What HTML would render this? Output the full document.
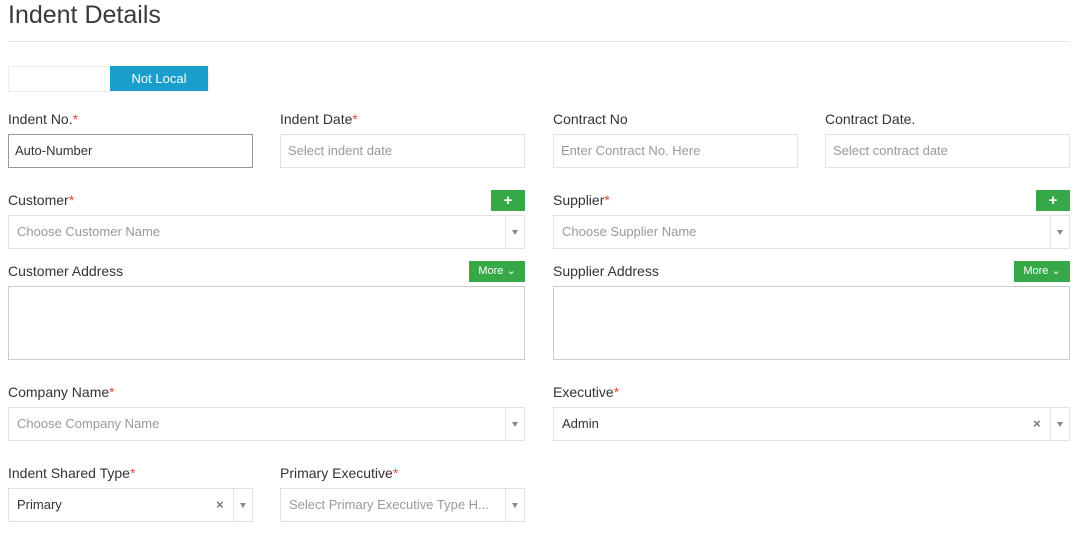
<!DOCTYPE html>
<html><head><style>
*{box-sizing:border-box;margin:0;padding:0}
body{width:1075px;height:539px;background:#fff;font-family:"Liberation Sans",sans-serif;color:#333;position:relative;overflow:hidden}
.a{position:absolute}
.t{left:8px;top:1px;font-size:25px;font-weight:300;color:#3a3a3a;letter-spacing:0px}
.hr{left:8px;top:41px;width:1062px;height:1px;background:#e8e8e8}
.lbl{font-size:14px;color:#333;line-height:18px}
.lbl b{color:#e74c3c;font-weight:normal}
.inp{height:34px;border:1px solid #e2e2e2;font-size:13px;color:#999;padding-left:8px;line-height:32px;white-space:nowrap;overflow:hidden}
.sel .ar{position:absolute;right:0;top:0;width:19px;height:32px;border-left:1px solid #e2e2e2}
.sel .ar:after{content:"";position:absolute;left:6px;top:14px;border:3.5px solid transparent;border-top:5px solid #888;border-bottom:0}
.x{position:absolute;font-size:13px;color:#777;font-weight:bold;top:0}
.btn{background:#36a847;color:#fff;font-size:11px;text-align:center;line-height:21px;height:21px}
</style></head><body>
<div class="a t">Indent Details</div>
<div class="a hr"></div>
<div class="a" style="left:8px;top:66px;width:201px;height:26px;border:1px solid #eee"></div>
<div class="a" style="left:110px;top:66px;width:98px;height:25px;background:#1a9ecb;color:#fff;font-size:13px;text-align:center;line-height:25px">Not Local</div>

<div class="a lbl" style="left:8px;top:110px">Indent No.<b>*</b></div>
<div class="a lbl" style="left:280px;top:110px">Indent Date<b>*</b></div>
<div class="a lbl" style="left:553px;top:110px">Contract No</div>
<div class="a lbl" style="left:825px;top:110px">Contract Date.</div>
<div class="a inp" style="left:8px;top:134px;width:245px;border-color:#999;color:#333;padding-left:6px">Auto-Number</div>
<div class="a inp" style="left:280px;top:134px;width:245px;padding-left:7px">Select indent date</div>
<div class="a inp" style="left:553px;top:134px;width:245px;padding-left:7px">Enter Contract No. Here</div>
<div class="a inp" style="left:825px;top:134px;width:245px;padding-left:7px">Select contract date</div>

<div class="a lbl" style="left:8px;top:191px">Customer<b>*</b></div>
<div class="a btn" style="left:491px;top:190px;width:34px;font-size:15px;font-weight:bold">+</div>
<div class="a inp sel" style="left:8px;top:215px;width:517px">Choose Customer Name<div class="ar"></div></div>
<div class="a lbl" style="left:553px;top:191px">Supplier<b>*</b></div>
<div class="a btn" style="left:1036px;top:190px;width:34px;font-size:15px;font-weight:bold">+</div>
<div class="a inp sel" style="left:553px;top:215px;width:517px">Choose Supplier Name<div class="ar"></div></div>

<div class="a lbl" style="left:8px;top:262px">Customer Address</div>
<div class="a btn" style="left:469px;top:261px;width:56px">More &#8964;</div>
<div class="a" style="left:8px;top:286px;width:517px;height:74px;border:1px solid #ccc"></div>
<div class="a lbl" style="left:553px;top:262px">Supplier Address</div>
<div class="a btn" style="left:1014px;top:261px;width:56px">More &#8964;</div>
<div class="a" style="left:553px;top:286px;width:517px;height:74px;border:1px solid #ccc"></div>

<div class="a lbl" style="left:8px;top:383px">Company Name<b>*</b></div>
<div class="a inp sel" style="left:8px;top:407px;width:517px">Choose Company Name<div class="ar"></div></div>
<div class="a lbl" style="left:553px;top:383px">Executive<b>*</b></div>
<div class="a inp sel" style="left:553px;top:407px;width:517px;color:#333">Admin<span class="x" style="left:479px">×</span><div class="ar"></div></div>

<div class="a lbl" style="left:8px;top:464px">Indent Shared Type<b>*</b></div>
<div class="a inp sel" style="left:8px;top:488px;width:245px;color:#333">Primary<span class="x" style="left:207px">×</span><div class="ar"></div></div>
<div class="a lbl" style="left:280px;top:464px">Primary Executive<b>*</b></div>
<div class="a inp sel" style="left:280px;top:488px;width:245px;padding-right:24px;text-overflow:ellipsis">Select Primary Executive Type H...<div class="ar"></div></div>
</body></html>
